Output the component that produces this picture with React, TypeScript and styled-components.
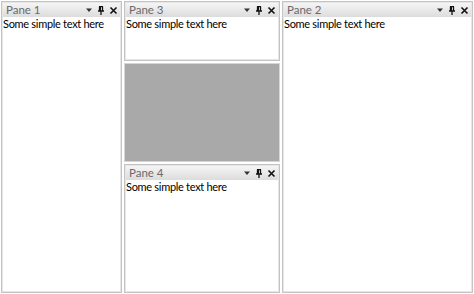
import React from "react";
import styled, { createGlobalStyle } from "styled-components";

const Global = createGlobalStyle`
  html, body { margin: 0; padding: 0; background: #ffffff; }
  body { font-family: Lato, "Liberation Sans", Arial, sans-serif; }
`;

const Root = styled.div`
  display: flex;
  gap: 2px;
  padding: 1px;
  width: 474px;
  height: 294px;
  box-sizing: border-box;
`;

const Column = styled.div<{ $w?: number }>`
  display: flex;
  flex-direction: column;
  gap: 2px;
  ${(p) => (p.$w ? `width: ${p.$w}px; flex: none;` : "flex: 1;")}
  min-width: 0;
`;

const PaneBox = styled.div<{ $h?: number }>`
  display: flex;
  flex-direction: column;
  border: 1px solid #c4c4c4;
  box-shadow: inset 0 0 0 1px #e6e6e6;
  background: #fff;
  box-sizing: border-box;
  padding: 1px;
  ${(p) => (p.$h ? `height: ${p.$h}px; flex: none;` : "flex: 1;")}
  min-height: 0;
`;

const Header = styled.div`
  display: flex;
  align-items: center;
  height: 14px;
  padding: 0 2px 0 3px;
  background: linear-gradient(#f5f5f5, #dcdcdc);
  color: #6a6a6a;
  font-size: 11.5px;
  line-height: 14px;
`;

const Title = styled.span`
  flex: 1;
  white-space: nowrap;
`;

const Icons = styled.div`
  display: flex;
  align-items: center;
  gap: 4px;
`;

const Body = styled.div`
  padding: 0 0;
  font-size: 11px;
  letter-spacing: -0.3px;
  color: #000;
  line-height: 14px;
  white-space: nowrap;
  overflow: hidden;
`;

const Splitter = styled.div`
  height: 97px;
  flex: none;
  background: #a9a9a9;
  border: 1px solid #d6d6d6;
`;

const Arrow = () => (
  <svg width="8" height="8" viewBox="0 0 8 8">
    <path d="M1 2.5 L7 2.5 L4 6 Z" fill="#333" />
  </svg>
);
const Pin = () => (
  <svg width="8" height="9" viewBox="0 0 8 9">
    <path d="M2 0.5 H6 M2.5 0.5 V5 M5.5 0.5 V5 M1 5 H7 M4 5 V9" stroke="#111" strokeWidth="1.3" fill="none" />
    <rect x="2.5" y="1" width="1.5" height="4" fill="#111" />
  </svg>
);
const Close = () => (
  <svg width="9" height="9" viewBox="0 0 9 9">
    <path d="M1.5 1.5 L7.5 7.5 M7.5 1.5 L1.5 7.5" stroke="#111" strokeWidth="1.6" />
  </svg>
);

const Pane = ({ title, h }: { title: string; h?: number }) => (
  <PaneBox $h={h}>
    <Header>
      <Title>{title}</Title>
      <Icons>
        <Arrow />
        <Pin />
        <Close />
      </Icons>
    </Header>
    <Body>Some simple text here</Body>
  </PaneBox>
);

export default function App() {
  return (
    <>
      <Global />
      <Root>
        <Column $w={121}>
          <Pane title="Pane 1" />
        </Column>
        <Column $w={156}>
          <Pane title="Pane 3" h={60} />
          <Splitter />
          <Pane title="Pane 4" />
        </Column>
        <Column>
          <Pane title="Pane 2" />
        </Column>
      </Root>
    </>
  );
}
